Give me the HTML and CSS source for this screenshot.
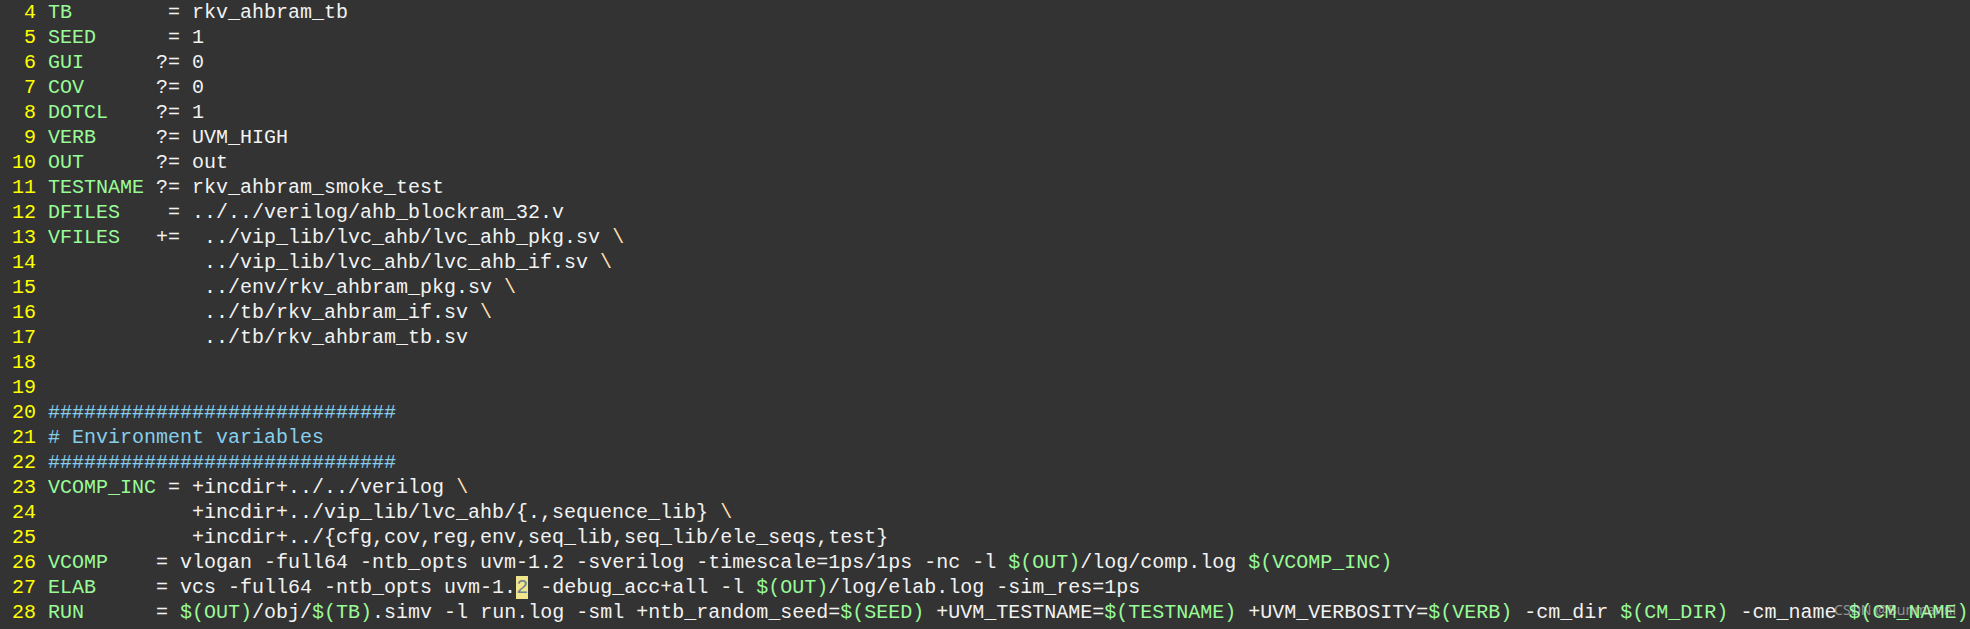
FILE: index.html
```html
<!DOCTYPE html>
<html lang="en">
<head>
    <meta charset="UTF-8">
    <title>Makefile</title>
    <link rel="stylesheet" href="styles.css">
</head>
<body>

    <div class="editor">
        <div class="line"><span class="nr">  4</span> <span class="id">TB</span>        = rkv_ahbram_tb</div>
        <div class="line"><span class="nr">  5</span> <span class="id">SEED</span>      = 1</div>
        <div class="line"><span class="nr">  6</span> <span class="id">GUI</span>      ?= 0</div>
        <div class="line"><span class="nr">  7</span> <span class="id">COV</span>      ?= 0</div>
        <div class="line"><span class="nr">  8</span> <span class="id">DOTCL</span>    ?= 1</div>
        <div class="line"><span class="nr">  9</span> <span class="id">VERB</span>     ?= UVM_HIGH</div>
        <div class="line"><span class="nr"> 10</span> <span class="id">OUT</span>      ?= out</div>
        <div class="line"><span class="nr"> 11</span> <span class="id">TESTNAME</span> ?= rkv_ahbram_smoke_test</div>
        <div class="line"><span class="nr"> 12</span> <span class="id">DFILES</span>    = ../../verilog/ahb_blockram_32.v</div>
        <div class="line"><span class="nr"> 13</span> <span class="id">VFILES</span>   +=  ../vip_lib/lvc_ahb/lvc_ahb_pkg.sv <span class="sp">\</span></div>
        <div class="line"><span class="nr"> 14</span>              ../vip_lib/lvc_ahb/lvc_ahb_if.sv <span class="sp">\</span></div>
        <div class="line"><span class="nr"> 15</span>              ../env/rkv_ahbram_pkg.sv <span class="sp">\</span></div>
        <div class="line"><span class="nr"> 16</span>              ../tb/rkv_ahbram_if.sv <span class="sp">\</span></div>
        <div class="line"><span class="nr"> 17</span>              ../tb/rkv_ahbram_tb.sv</div>
        <div class="line"><span class="nr"> 18</span> </div>
        <div class="line"><span class="nr"> 19</span> </div>
        <div class="line"><span class="nr"> 20</span> <span class="cm">#############################</span></div>
        <div class="line"><span class="nr"> 21</span> <span class="cm"># Environment variables</span></div>
        <div class="line"><span class="nr"> 22</span> <span class="cm">#############################</span></div>
        <div class="line"><span class="nr"> 23</span> <span class="id">VCOMP_INC</span> = +incdir+../../verilog <span class="sp">\</span></div>
        <div class="line"><span class="nr"> 24</span>             +incdir+../vip_lib/lvc_ahb/{.,sequence_lib} <span class="sp">\</span></div>
        <div class="line"><span class="nr"> 25</span>             +incdir+../{cfg,cov,reg,env,seq_lib,seq_lib/ele_seqs,test}</div>
        <div class="line"><span class="nr"> 26</span> <span class="id">VCOMP</span>    = vlogan -full64 -ntb_opts uvm-1.2 -sverilog -timescale=1ps/1ps -nc -l <span class="id">$(OUT)</span>/log/comp.log <span class="id">$(VCOMP_INC)</span></div>
        <div class="line"><span class="nr"> 27</span> <span class="id">ELAB</span>     = vcs -full64 -ntb_opts uvm-1.<span class="cursor">2</span> -debug_acc+all -l <span class="id">$(OUT)</span>/log/elab.log -sim_res=1ps</div>
        <div class="line"><span class="nr"> 28</span> <span class="id">RUN</span>      = <span class="id">$(OUT)</span>/obj/<span class="id">$(TB)</span>.simv -l run.log -sml +ntb_random_seed=<span class="id">$(SEED)</span> +UVM_TESTNAME=<span class="id">$(TESTNAME)</span> +UVM_VERBOSITY=<span class="id">$(VERB)</span> -cm_dir <span class="id">$(CM_DIR)</span> -cm_name <span class="id">$(CM_NAME)</span></div>
    </div>

    <div class="watermark">CSDN @Bunmanni</div>

</body>
</html>
```

FILE: styles.css
```css
html, body {
    margin: 0;
    padding: 0;
    background: #333333;
    overflow: hidden;
}
body {
    width: 1970px;
    height: 629px;
    position: relative;
}
.editor {
    font-family: "Liberation Mono", "Courier New", monospace;
    font-size: 20px;
    line-height: 25px;
    color: #f2f2f2;
}
.line {
    height: 25px;
    white-space: pre;
}
.nr {
    color: #ffff00;
}
.id {
    color: #98fb98;
}
.cm {
    color: #87ceeb;
}
.sp {
    color: #ffdead;
}
.cursor {
    background: #f0e68c;
    color: #708090;
}
.watermark {
    position: absolute;
    right: 14px;
    bottom: 10px;
    font-family: "Noto Sans", sans-serif;
    font-size: 14px;
    color: rgba(230, 230, 230, 0.55);
}
```
